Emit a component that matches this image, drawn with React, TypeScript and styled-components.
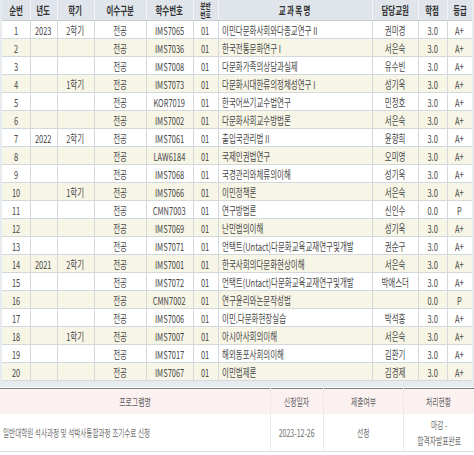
import React from 'react';
import styled, { createGlobalStyle } from 'styled-components';

const GlobalStyle = createGlobalStyle`
  html, body { margin: 0; padding: 0; background: #fff; }
  body { font-family: "Noto Sans CJK KR", "Noto Sans", sans-serif; }
`;

const Page = styled.div`
  width: 474px;
  height: 455px;
  overflow: hidden;
  display: flex;
  flex-direction: column;
`;

const GradeBox = styled.div`
  background: #e6ebef;
  padding: 0 2px 6px 2px;
`;

const GradeTable = styled.table`
  width: 470px;
  table-layout: fixed;
  border-collapse: collapse;
  font-size: 11px;
  color: #484848;
`;

const HeadCell = styled.th`
  height: 20px;
  padding: 0;
  background: #dfe5ea;
  color: #333;
  font-weight: 700;
  border-left: 1px solid #f3f5f7;
  border-bottom: 1px solid #c7ced4;
  line-height: 10px;
  vertical-align: middle;
  &:first-child { border-left: 0; }
`;

const HeadInner = styled.div`
  display: flex;
  align-items: center;
  justify-content: center;
  height: 20px;
`;

const Row = styled.tr<{ $alt: boolean }>`
  background: ${(p) => (p.$alt ? '#f7f5e6' : '#ffffff')};
`;

const Cell = styled.td`
  height: 17px;
  padding: 0;
  border-left: 1px solid #d3d8dc;
  border-bottom: 1px solid #d3d8dc;
  vertical-align: middle;
  &:first-child { border-left: 0; }
`;

const Inner = styled.div<{ $left?: boolean; $h: number }>`
  display: flex;
  align-items: center;
  justify-content: ${(p) => (p.$left ? 'flex-start' : 'center')};
  padding-left: ${(p) => (p.$left ? '3px' : '0')};
  height: ${(p) => p.$h}px;
  overflow: hidden;
`;

const Sq = styled.span<{ $left?: boolean; $scale?: number; $spacing?: number }>`
  display: inline-block;
  flex-shrink: 0;
  white-space: nowrap;
  letter-spacing: ${(p) => p.$spacing ?? 0}px;
  transform: scaleX(${(p) => p.$scale ?? 0.68});
  transform-origin: ${(p) => (p.$left ? 'left' : 'center')} center;
`;

const Wrap2 = styled.span`
  display: block;
  width: 17px;
  white-space: normal;
  word-break: break-all;
  text-align: center;
  font-size: 8.5px;
  line-height: 9px;
`;

const ProgramTable = styled.table`
  width: 474px;
  table-layout: fixed;
  border-collapse: collapse;
  border-top: 1px solid #7d7d7d;
  margin-top: 1px;
  font-size: 10px;
  color: #707070;
`;

const PHead = styled.th`
  height: 25px;
  padding: 0;
  background: #fcf1f1;
  color: #606060;
  font-weight: 400;
  border-left: 1px solid #f3e6e6;
  vertical-align: middle;
  &:first-child { border-left: 0; }
`;

const PCell = styled.td`
  height: 37px;
  padding: 0;
  border-left: 1px solid #ebebeb;
  border-bottom: 1px solid #e0e0e0;
  vertical-align: middle;
  &:first-child { border-left: 0; }
`;

const Lines = styled.span`
  display: flex;
  flex-direction: column;
  align-items: center;
  line-height: 16px;
`;

type Course = [string, string, string, string, string, string, string, string, string];

const rows: Course[] = [
  ['2023', '2학기', '전공', 'IMS7065', '01', '이민다문화사회와다종교연구 II', '권미경', '3.0', 'A+'],
  ['', '', '전공', 'IMS7036', '01', '한국전통문화연구 I', '서은숙', '3.0', 'A+'],
  ['', '', '전공', 'IMS7008', '01', '다문화가족의상담과실제', '유수빈', '3.0', 'A+'],
  ['', '1학기', '전공', 'IMS7073', '01', '다문화시대한류의정체성연구 I', '성기욱', '3.0', 'A+'],
  ['', '', '전공', 'KOR7019', '01', '한국어쓰기교수법연구', '민정호', '3.0', 'A+'],
  ['', '', '전공', 'IMS7002', '01', '다문화사회교수방법론', '서은숙', '3.0', 'A+'],
  ['2022', '2학기', '전공', 'IMS7061', '01', '출입국관리법 II', '윤향희', '3.0', 'A+'],
  ['', '', '전공', 'LAW6184', '01', '국제인권법연구', '오미영', '3.0', 'A+'],
  ['', '', '전공', 'IMS7068', '01', '국경관리와체류의이해', '성기욱', '3.0', 'A+'],
  ['', '1학기', '전공', 'IMS7066', '01', '이민정책론', '서은숙', '3.0', 'A+'],
  ['', '', '전공', 'CMN7003', '01', '연구방법론', '신인수', '0.0', 'P'],
  ['', '', '전공', 'IMS7069', '01', '난민법의이해', '성기욱', '3.0', 'A+'],
  ['', '', '전공', 'IMS7071', '01', '언택트(Untact)다문화교육교재연구및개발', '권순구', '3.0', 'A+'],
  ['2021', '2학기', '전공', 'IMS7001', '01', '한국사회의다문화현상이해', '서은숙', '3.0', 'A+'],
  ['', '', '전공', 'IMS7072', '01', '언택트(Untact)다문화교육교재연구및개발', '박애스더', '3.0', 'A+'],
  ['', '', '전공', 'CMN7002', '01', '연구윤리와논문작성법', '', '0.0', 'P'],
  ['', '', '전공', 'IMS7006', '01', '이민.다문화현장실습', '박석홍', '3.0', 'A+'],
  ['', '1학기', '전공', 'IMS7007', '01', '아시아사회의이해', '서은숙', '3.0', 'A+'],
  ['', '', '전공', 'IMS7017', '01', '해외동포사회의이해', '김환기', '3.0', 'A+'],
  ['', '', '전공', 'IMS7067', '01', '이민법제론', '김경제', '3.0', 'A+'],
];

const colWidths = [28, 27, 37, 52, 47, 25, 154, 46, 29, 25];
const headers = ['순번', '년도', '학기', '이수구분', '학수번호', '분반번호', '교과목명', '담당교원', '학점', '등급'];

export default function App() {
  return (
    <>
      <GlobalStyle />
      <Page>
        <GradeBox>
          <GradeTable>
            <colgroup>
              {colWidths.map((w, i) => (
                <col key={i} style={{ width: w }} />
              ))}
            </colgroup>
            <thead>
              <tr>
                {headers.map((h, i) => (
                  <HeadCell key={i}>
                    <HeadInner>
                      {i === 5 ? (
                        <Sq>
                          <Wrap2>{h}</Wrap2>
                        </Sq>
                      ) : (
                        <Sq $spacing={i === 6 ? 2 : 0}>{h}</Sq>
                      )}
                    </HeadInner>
                  </HeadCell>
                ))}
              </tr>
            </thead>
            <tbody>
              {rows.map((r, idx) => (
                <Row key={idx} $alt={idx % 2 === 1}>
                  <Cell>
                    <Inner $h={17}>
                      <Sq>{idx + 1}</Sq>
                    </Inner>
                  </Cell>
                  {r.map((v, ci) => (
                    <Cell key={ci}>
                      <Inner $h={17} $left={ci === 5}>
                        <Sq $left={ci === 5}>{v}</Sq>
                      </Inner>
                    </Cell>
                  ))}
                </Row>
              ))}
            </tbody>
          </GradeTable>
        </GradeBox>
        <ProgramTable>
          <colgroup>
            <col style={{ width: 270 }} />
            <col style={{ width: 53 }} />
            <col style={{ width: 80 }} />
            <col style={{ width: 71 }} />
          </colgroup>
          <thead>
            <tr>
              <PHead>
                <Inner $h={25}>
                  <Sq $scale={0.68}>프로그램명</Sq>
                </Inner>
              </PHead>
              <PHead>
                <Inner $h={25}>
                  <Sq $scale={0.68}>신청일자</Sq>
                </Inner>
              </PHead>
              <PHead>
                <Inner $h={25}>
                  <Sq $scale={0.68}>제출여부</Sq>
                </Inner>
              </PHead>
              <PHead>
                <Inner $h={25}>
                  <Sq $scale={0.68}>처리현황</Sq>
                </Inner>
              </PHead>
            </tr>
          </thead>
          <tbody>
            <tr>
              <PCell>
                <Inner $h={37} $left>
                  <Sq $left $scale={0.66}>일반대학원 석사과정 및 석박사통합과정 조기수료 신청</Sq>
                </Inner>
              </PCell>
              <PCell>
                <Inner $h={37}>
                  <Sq $scale={0.7}>2023-12-26</Sq>
                </Inner>
              </PCell>
              <PCell>
                <Inner $h={37}>
                  <Sq $scale={0.68}>선정</Sq>
                </Inner>
              </PCell>
              <PCell>
                <Inner $h={37}>
                  <Sq $scale={0.68}>
                    <Lines>
                      <span>마감 -</span>
                      <span>합격자발표완료</span>
                    </Lines>
                  </Sq>
                </Inner>
              </PCell>
            </tr>
          </tbody>
        </ProgramTable>
      </Page>
    </>
  );
}
